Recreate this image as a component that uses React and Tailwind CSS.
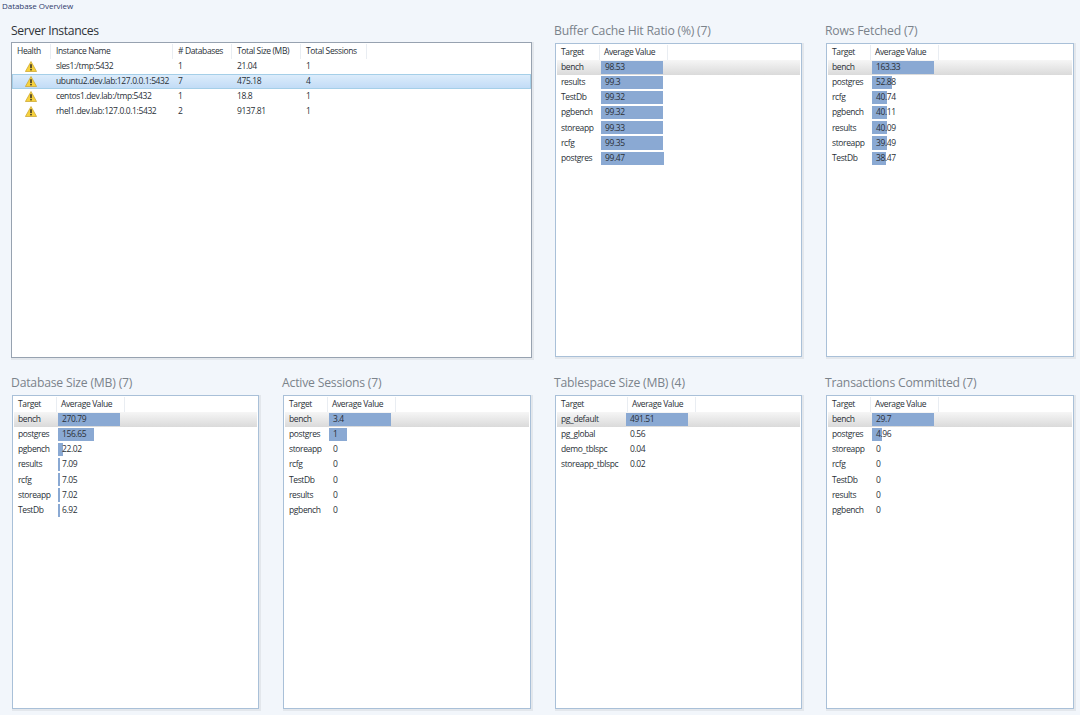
const FONT = "font-['Open_Sans',sans-serif]";

function Warn() {
  return (
    <svg width="12" height="11" viewBox="0 0 12 11" className="block">
      <path d="M6 0.5 L11.6 10.5 L0.4 10.5 Z" fill="#f7d23e" stroke="#c9a227" strokeWidth="0.7" strokeLinejoin="round" />
      <rect x="5.3" y="3.2" width="1.4" height="4" fill="#222" />
      <rect x="5.3" y="8" width="1.4" height="1.4" fill="#222" />
    </svg>
  );
}

function HeadCell({ w, pad = 5, children }) {
  return (
    <div style={{ width: w, paddingLeft: pad }} className="shrink-0 h-full flex items-center border-r border-[#e9edf2] whitespace-nowrap">
      {children}
    </div>
  );
}

function ServerTable() {
  const cols = [39, 122, 59, 69, 66];
  const rows = [
    ["sles1:/tmp:5432", "1", "21.04", "1"],
    ["ubuntu2.dev.lab:127.0.0.1:5432", "7", "475.18", "4"],
    ["centos1.dev.lab:/tmp:5432", "1", "18.8", "1"],
    ["rhel1.dev.lab:127.0.0.1:5432", "2", "9137.81", "1"],
  ];
  return (
    <div className="flex flex-col min-h-0">
      <h2 className="h-[28px] flex items-end leading-[18px] text-[12.2px] tracking-[-0.35px] font-normal text-[#2f3338]">Server Instances</h2>
      <div className="mt-[2px] h-[316px] w-[521px] border border-[#97a2b0] bg-white shadow-[1px_1px_0_1px_#e3e7ec] text-[8.5px] tracking-[-0.38px] text-[#2a3037]">
        <div className="flex h-[15.5px] items-center pt-[1px]">
          {cols.map((w, i) => (
            <HeadCell key={i} w={w}>
              {["Health", "Instance Name", "# Databases", "Total Size (MB)", "Total Sessions"][i]}
            </HeadCell>
          ))}
        </div>
        {rows.map((r, i) => (
          <div
            key={r[0]}
            className={
              i === 1
                ? "flex h-[15.2px] items-center border border-[#a5cfe8] bg-gradient-to-b from-[#dcecfb] to-[#c2dcf6]"
                : "flex h-[15.2px] items-center border border-transparent"
            }
          >
            <div style={{ width: cols[0] - 1 }} className="shrink-0 flex justify-center pr-[2px]"><Warn /></div>
            <div style={{ width: cols[1] }} className="shrink-0 pl-[5px] whitespace-nowrap">{r[0]}</div>
            <div style={{ width: cols[2] }} className="shrink-0 pl-[5px]">{r[1]}</div>
            <div style={{ width: cols[3] }} className="shrink-0 pl-[5px]">{r[2]}</div>
            <div style={{ width: cols[4] }} className="shrink-0 pl-[5px]">{r[3]}</div>
          </div>
        ))}
      </div>
    </div>
  );
}

function Panel({ title, rows, col1 = 43, head1, boxH, titleH, gap }) {
  return (
    <div className="flex flex-col min-w-0">
      <h2 style={{ height: titleH }} className="flex items-end text-[12.2px] tracking-[-0.2px] font-normal leading-[18px] text-[#7b838b] whitespace-nowrap">{title}</h2>
      <div style={{ height: boxH, marginTop: gap }} className="ml-[1px] border border-[#a9c0d8] bg-white shadow-[1px_1px_0_1px_#e3e7ec] p-[1px] text-[8.5px] tracking-[-0.38px] text-[#2a3037]">
        <div className="flex h-[15px] items-center">
          <HeadCell w={head1 || col1} pad={4}>Target</HeadCell>
          <HeadCell w={68} pad={4}>Average Value</HeadCell>
        </div>
        {rows.map((r, i) => (
          <div
            key={r[0]}
            className={
              i === 0
                ? "flex h-[15.1px] items-center bg-gradient-to-b from-[#f6f6f6] to-[#dadada]"
                : "flex h-[15.1px] items-center"
            }
          >
            <div style={{ width: col1 }} className="shrink-0 pl-[4px] whitespace-nowrap">{r[0]}</div>
            <div className="relative h-full flex items-center pl-[5px] whitespace-nowrap">
              {r[2] > 0 && (
                <div style={{ width: r[2] }} className="absolute left-[1px] top-[1px] bottom-[1px] bg-[#8aa9d3]" />
              )}
              <span className="relative">{r[1]}</span>
            </div>
          </div>
        ))}
      </div>
    </div>
  );
}

const buffer = [["bench","98.53",62],["results","99.3",62],["TestDb","99.32",62],["pgbench","99.32",62],["storeapp","99.33",62],["rcfg","99.35",62],["postgres","99.47",63]];
const fetched = [["bench","163.33",62],["postgres","52.88",20],["rcfg","40.74",15],["pgbench","40.11",15],["results","40.09",15],["storeapp","39.49",15],["TestDb","38.47",14]];
const dbsize = [["bench","270.79",62],["postgres","156.65",36],["pgbench","22.02",5],["results","7.09",2],["rcfg","7.05",2],["storeapp","7.02",2],["TestDb","6.92",2]];
const sessions = [["bench","3.4",62],["postgres","1",18],["storeapp","0",0],["rcfg","0",0],["TestDb","0",0],["results","0",0],["pgbench","0",0]];
const tablespace = [["pg_default","491.51",62],["pg_global","0.56",0],["demo_tblspc","0.04",0],["storeapp_tblspc","0.02",0]];
const committed = [["bench","29.7",62],["postgres","4.96",10],["storeapp","0",0],["rcfg","0",0],["TestDb","0",0],["results","0",0],["pgbench","0",0]];

export default function App() {
  return (
    <div className={`${FONT} w-[1080px] h-[715px] overflow-hidden bg-[#f2f6fb] flex flex-col`}>
      <div className="h-[12px] pl-[2px] text-[8px] tracking-[-0.05px] leading-[11px] text-[#2f3a6b]">Database Overview</div>
      <div className="grid grid-cols-[248px_249px_248px_249px] gap-x-[23px] pl-[11px]">
        <div className="col-span-2"><ServerTable /></div>
        <Panel title="Buffer Cache Hit Ratio (%) (7)" rows={buffer} titleH={28} gap={3} boxH={314} />
        <Panel title="Rows Fetched (7)" rows={fetched} titleH={28} gap={3} boxH={314} />
        <Panel title="Database Size (MB) (7)" rows={dbsize} titleH={34} gap={3} boxH={314} />
        <Panel title="Active Sessions (7)" rows={sessions} titleH={34} gap={3} boxH={314} />
        <Panel title="Tablespace Size (MB) (4)" rows={tablespace} col1={68} head1={71} titleH={34} gap={3} boxH={314} />
        <Panel title="Transactions Committed (7)" rows={committed} titleH={34} gap={3} boxH={314} />
      </div>
    </div>
  );
}
